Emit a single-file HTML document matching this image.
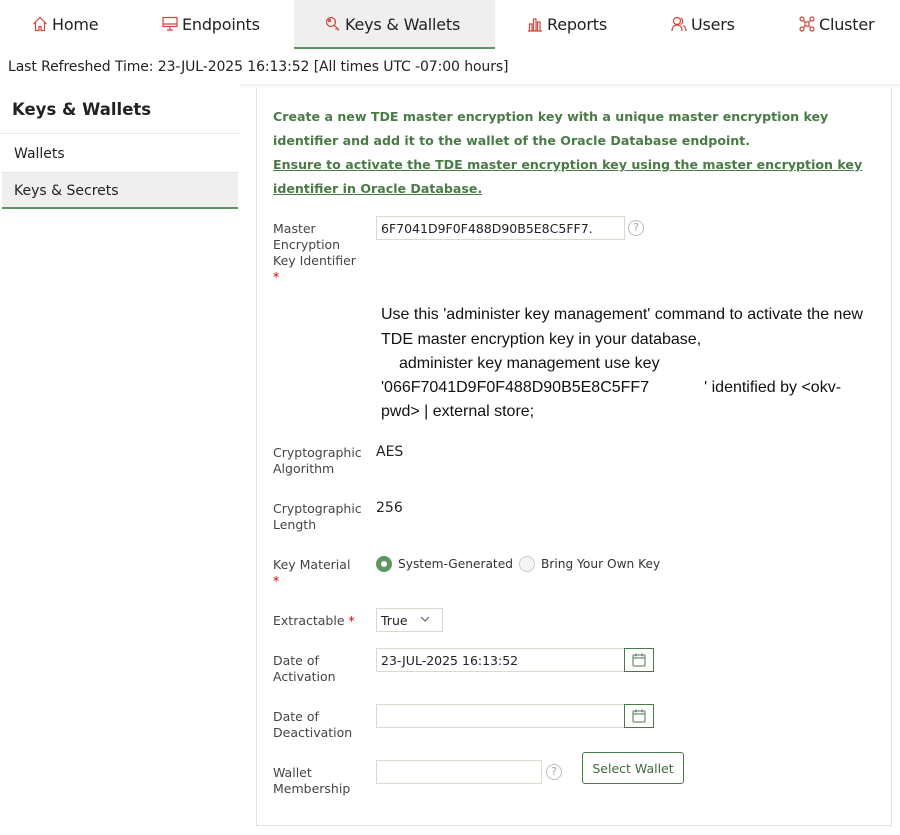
<!DOCTYPE html>
<html><head><meta charset="utf-8"><style>
*{margin:0;padding:0;box-sizing:border-box}
body{width:900px;height:835px;background:#fff;font-family:"DejaVu Sans","Liberation Sans",sans-serif;color:#222;position:relative;overflow:hidden}
.a{position:absolute;white-space:nowrap}
.nav{font-size:16px;top:15px;color:#222;letter-spacing:-0.2px}
.ic{position:absolute;top:16px}
.lbl{font-size:12.5px;color:#444;line-height:16px;left:273px;white-space:normal;width:90px}
.req{color:#d00}
.g{color:#4a7a46;font-weight:bold;font-size:12.6px;left:273px}
.inp{position:absolute;border:1px solid #ddd8cc;background:#fff;height:24px;font-size:12.5px;padding:4px 4px 2px}
.cal{position:absolute;width:30px;height:24px;border:1px solid #4a7a46;background:#fff}
.cmd{font-family:"Liberation Sans",sans-serif;font-size:16px;left:381px;color:#111}
.help{position:absolute;width:16px;height:16px;border:1px solid #bbb;border-radius:50%;font-size:11px;color:#aaa;text-align:center;line-height:14px}
</style></head><body>
<div class="a" style="left:294px;top:0;width:201px;height:49px;background:#efefef;border-bottom:2px solid #5e9660"></div>
<svg class="ic" style="left:32px" width="16" height="16" viewBox="0 0 16 16" fill="none" stroke="#d0453a" stroke-width="1.2"><path d="M1.5 8L8 1.5 14.5 8M3.5 6v8.5h3.5v-4h2v4h3.5V6"/></svg>
<div class="a nav" style="left:52px">Home</div>
<svg class="ic" style="left:162px" width="16" height="16" viewBox="0 0 16 16" fill="none" stroke="#d0453a" stroke-width="1.2"><rect x="1" y="1.5" width="14" height="9"/><path d="M1 8h14M8 10.5v3M5 14h6"/></svg>
<div class="a nav" style="left:182px">Endpoints</div>
<svg class="ic" style="left:325px" width="16" height="16" viewBox="0 0 16 16" fill="none" stroke="#d0453a" stroke-width="1.2"><circle cx="6" cy="6" r="4.5"/><circle cx="4.5" cy="4.5" r="1"/><path d="M9 9l5 5M12 12l-1.5 1.5M13.5 13.5l-1 1"/></svg>
<div class="a nav" style="left:345px">Keys &amp; Wallets</div>
<svg class="ic" style="left:527px" width="16" height="16" viewBox="0 0 16 16" fill="none" stroke="#d0453a" stroke-width="1.2"><path d="M1 15h14M2.5 15V8h2.5v7M6.5 15V3h2.5v12M10.5 15V6h2.5v9"/></svg>
<div class="a nav" style="left:547px">Reports</div>
<svg class="ic" style="left:671px" width="16" height="16" viewBox="0 0 16 16" fill="none" stroke="#d0453a" stroke-width="1.2"><circle cx="6" cy="5" r="3.5"/><path d="M1 15c0-4 2-6 5-6s5 2 5 6M9.5 2a3.5 3.5 0 010 6.5M12 9.5c2 .8 3 2.8 3 5.5"/></svg>
<div class="a nav" style="left:691px">Users</div>
<svg class="ic" style="left:799px" width="16" height="16" viewBox="0 0 16 16" fill="none" stroke="#d0453a" stroke-width="1.2"><circle cx="3" cy="3" r="2"/><circle cx="13" cy="3" r="2"/><circle cx="3" cy="13" r="2"/><circle cx="13" cy="13" r="2"/><rect x="6" y="6" width="4" height="4"/><path d="M4.5 4.5L6 6M11.5 4.5L10 6M4.5 11.5L6 10M11.5 11.5L10 10"/></svg>
<div class="a nav" style="left:819px">Cluster</div>

<div class="a" style="left:8px;top:59px;font-size:14px;letter-spacing:-0.1px">Last Refreshed Time: 23-JUL-2025 16:13:52 [All times UTC -07:00 hours]</div>

<div class="a" style="left:240px;top:84px;width:660px;height:4px;background:linear-gradient(#eee,#fff)"></div>
<div class="a" style="left:12px;top:100px;font-size:16.5px;font-weight:bold;color:#222">Keys &amp; Wallets</div>
<div class="a" style="left:0;top:133px;width:240px;height:1px;background:#e8e8e8"></div>
<div class="a" style="left:14px;top:146px;font-size:14px">Wallets</div>
<div class="a" style="left:2px;top:172px;width:236px;height:37px;background:#efefef;border-top:1px solid #e2e2e2;border-bottom:2px solid #5e9660"></div>
<div class="a" style="left:14px;top:183px;font-size:14px">Keys &amp; Secrets</div>

<div class="a" style="left:256px;top:88px;width:636px;height:738px;border:1px solid #e2e2e2;border-top:none"></div>

<div class="a g" style="top:109px">Create a new TDE master encryption key with a unique master encryption key</div>
<div class="a g" style="top:133px">identifier and add it to the wallet of the Oracle Database endpoint.</div>
<div class="a g" style="top:157px;text-decoration:underline">Ensure to activate the TDE master encryption key using the master encryption key</div>
<div class="a g" style="top:181px;text-decoration:underline">identifier in Oracle Database.</div>

<div class="a lbl" style="top:221px">Master Encryption Key Identifier<br><span class="req">*</span></div>
<div class="inp" style="left:376px;top:216px;width:249px">6F7041D9F0F488D90B5E8C5FF7.</div>
<div class="help" style="left:628px;top:220px">?</div>

<div class="a cmd" style="top:306px">Use this 'administer key management' command to activate the new</div>
<div class="a cmd" style="top:331px">TDE master encryption key in your database,</div>
<div class="a cmd" style="top:355px;left:399px">administer key management use key</div>
<div class="a cmd" style="top:379px">'066F7041D9F0F488D90B5E8C5FF7<span style="display:inline-block;width:55px"></span>' identified by &lt;okv-</div>
<div class="a cmd" style="top:403px">pwd&gt; | external store;</div>

<div class="a lbl" style="top:445px">Cryptographic Algorithm</div>
<div class="a" style="left:376px;top:444px;font-size:14px">AES</div>
<div class="a lbl" style="top:501px">Cryptographic Length</div>
<div class="a" style="left:376px;top:500px;font-size:14px">256</div>

<div class="a lbl" style="top:557px">Key Material<br><span class="req">*</span></div>
<div class="a" style="left:376px;top:556px;width:16px;height:16px;border-radius:50%;background:#5e9660"><div style="position:absolute;left:5px;top:5px;width:6px;height:6px;border-radius:50%;background:#fff"></div></div>
<div class="a" style="left:398px;top:557px;font-size:12.2px;color:#333">System-Generated</div>
<div class="a" style="left:519px;top:556px;width:16px;height:16px;border-radius:50%;border:1px solid #ccc;background:#f4f4f4"></div>
<div class="a" style="left:541px;top:557px;font-size:12.2px;color:#333">Bring Your Own Key</div>

<div class="a lbl" style="top:613px;width:120px">Extractable <span class="req">*</span></div>
<div class="inp" style="left:376px;top:608px;width:67px">True</div>
<svg class="a" style="left:420px;top:616px" width="10" height="6" viewBox="0 0 10 6" fill="none" stroke="#555" stroke-width="1"><path d="M1 1l4 4 4-4"/></svg>

<div class="a lbl" style="top:653px">Date of Activation</div>
<div class="inp" style="left:376px;top:648px;width:249px">23-JUL-2025 16:13:52</div>
<div class="cal" style="left:624px;top:648px"><svg style="position:absolute;left:7px;top:4px" width="14" height="14" viewBox="0 0 14 14" fill="none" stroke="#4a7a46" stroke-width="1"><rect x="1" y="2" width="12" height="11" rx="1"/><path d="M1 5h12M4 0.5v3M10 0.5v3"/></svg></div>

<div class="a lbl" style="top:709px">Date of Deactivation</div>
<div class="inp" style="left:376px;top:704px;width:249px"></div>
<div class="cal" style="left:624px;top:704px"><svg style="position:absolute;left:7px;top:4px" width="14" height="14" viewBox="0 0 14 14" fill="none" stroke="#4a7a46" stroke-width="1"><rect x="1" y="2" width="12" height="11" rx="1"/><path d="M1 5h12M4 0.5v3M10 0.5v3"/></svg></div>

<div class="a lbl" style="top:765px">Wallet Membership</div>
<div class="inp" style="left:376px;top:760px;width:166px"></div>
<div class="help" style="left:546px;top:764px">?</div>
<div class="a" style="left:582px;top:752px;width:102px;height:32px;border:1px solid #4a7a46;border-radius:3px;font-size:12.5px;color:#3d6b3d;text-align:center;line-height:31px">Select Wallet</div>
</body></html>
